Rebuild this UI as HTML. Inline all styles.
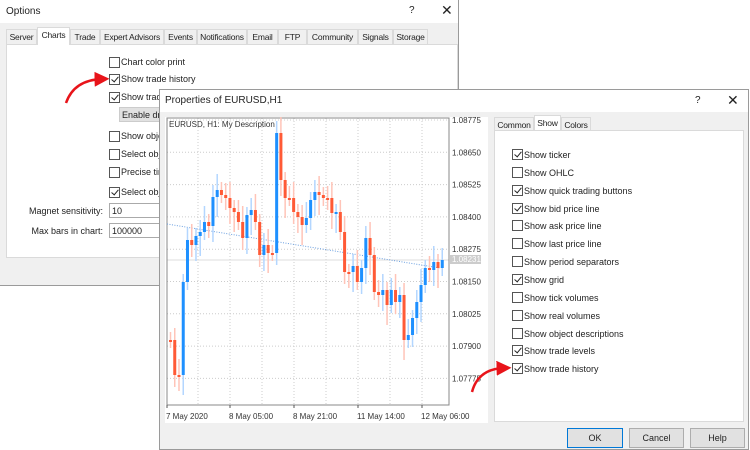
<!DOCTYPE html>
<html><head><meta charset="utf-8"><style>
*{box-sizing:border-box;margin:0;padding:0}
body{width:750px;height:450px;background:#fff;position:relative;overflow:hidden;font-family:"Liberation Sans",sans-serif;font-size:9px;color:#222}
.a{position:absolute}
.cb{position:absolute;width:11px;height:11px;border:1px solid #555;background:#fff}
.cb.c::after{content:"";position:absolute;left:3px;top:0px;width:3px;height:6px;border:solid #222;border-width:0 1px 1px 0;transform:rotate(40deg)}
.lbl{position:absolute;white-space:nowrap}
.tab{position:absolute;top:29px;height:15px;background:#f0f0f0;border:1px solid #dadada;border-bottom:none;text-align:center;line-height:14px;font-size:8.5px;white-space:nowrap;overflow:hidden;letter-spacing:-0.2px}
.btn{position:absolute;top:428px;height:20px;background:#e1e1e1;border:1px solid #adadad;text-align:center;line-height:18px;font-size:9px}
</style></head><body>
<!-- Options window -->
<div class="a" style="left:0;top:0;width:459px;height:286px;background:#f0f0f0;border:1px solid #9a9a9a;border-top:none;border-left:none"></div>
<div class="a" style="left:0;top:0;width:458px;height:23px;background:#fff"></div>
<div class="lbl" style="left:6px;top:6px;font-size:10px">Options</div>
<div class="lbl" style="left:409px;top:5px;font-size:10px">?</div>
<div class="lbl" style="left:441px;top:2px;font-size:14px">✕</div>
<div class="a" style="left:6px;top:44px;width:452px;height:214px;background:#fff;border:1px solid #dadada"></div>
<div class="tab" style="left:6px;width:31px">Server</div>
<div class="tab" style="left:37px;width:33px;top:27px;height:18px;background:#fff">Charts</div>
<div class="tab" style="left:70px;width:30px">Trade</div>
<div class="tab" style="left:100px;width:64px">Expert Advisors</div>
<div class="tab" style="left:164px;width:33px">Events</div>
<div class="tab" style="left:197px;width:50px">Notifications</div>
<div class="tab" style="left:247px;width:31px">Email</div>
<div class="tab" style="left:278px;width:29px">FTP</div>
<div class="tab" style="left:307px;width:51px">Community</div>
<div class="tab" style="left:358px;width:35px">Signals</div>
<div class="tab" style="left:393px;width:35px">Storage</div>
<div class="cb" style="left:109px;top:57px"></div><div class="lbl" style="left:121px;top:57px">Chart color print</div>
<div class="cb c" style="left:109px;top:74px"></div><div class="lbl" style="left:121px;top:74px">Show trade history</div>
<div class="cb c" style="left:109px;top:92px"></div><div class="lbl" style="left:121px;top:92px">Show trade</div>
<div class="a" style="left:119px;top:107px;width:45px;height:15px;background:#e1e1e1;border:1px solid #ccc"></div><div class="lbl" style="left:122px;top:110px">Enable dra</div>
<div class="cb" style="left:109px;top:131px"></div><div class="lbl" style="left:121px;top:131px">Show obje</div>
<div class="cb" style="left:109px;top:149px"></div><div class="lbl" style="left:121px;top:149px">Select obje</div>
<div class="cb" style="left:109px;top:167px"></div><div class="lbl" style="left:121px;top:167px">Precise tim</div>
<div class="cb c" style="left:109px;top:187px"></div><div class="lbl" style="left:121px;top:187px">Select obje</div>
<div class="lbl" style="right:647px;top:206px">Magnet sensitivity:</div>
<div class="a" style="left:109px;top:203px;width:55px;height:15px;border:1px solid #aaa;background:#fff"></div><div class="lbl" style="left:112px;top:206px">10</div>
<div class="lbl" style="right:647px;top:226px">Max bars in chart:</div>
<div class="a" style="left:109px;top:223px;width:55px;height:15px;border:1px solid #aaa;background:#fff"></div><div class="lbl" style="left:112px;top:226px">100000</div>

<!-- Properties window -->
<div class="a" style="left:159px;top:89px;width:590px;height:361px;background:#f0f0f0;border:1px solid #9a9a9a"></div>
<div class="a" style="left:160px;top:90px;width:588px;height:22px;background:#fff"></div>
<div class="lbl" style="left:165px;top:95px;font-size:10px">Properties of EURUSD,H1</div>
<div class="lbl" style="left:695px;top:95px;font-size:10px">?</div>
<div class="lbl" style="left:727px;top:92px;font-size:14px">✕</div>
<div class="a" style="left:165px;top:117px;width:323px;height:306px;background:#fff"></div>
<svg class="a" style="left:0;top:0" width="750" height="450" id="ch"></svg>
<div class="tab" style="left:494px;top:117px;width:40px">Common</div>
<div class="tab" style="left:534px;top:115px;width:27px;height:16px;background:#fff">Show</div>
<div class="tab" style="left:561px;top:117px;width:30px">Colors</div>
<div class="a" style="left:494px;top:130px;width:250px;height:292px;background:#fff;border:1px solid #dadada"></div>
<div id="rows"></div>
<div class="btn" style="left:567px;width:56px;border:1px solid #0078d7">OK</div>
<div class="btn" style="left:629px;width:55px">Cancel</div>
<div class="btn" style="left:690px;width:55px">Help</div>

<svg class="a" style="left:0;top:0" width="750" height="450">
<defs><marker id="ar" markerWidth="6" markerHeight="6" refX="3" refY="3" orient="auto"><path d="M0,0 L6,3 L0,6 z" fill="#e8141a"/></marker></defs>
<path d="M66,103 Q74,80 102,79" stroke="#e8141a" stroke-width="2.5" fill="none" marker-end="url(#ar)"/>
<path d="M472,392 Q478,369 504,368" stroke="#e8141a" stroke-width="2.5" fill="none" marker-end="url(#ar)"/>
</svg>
<script>
var rows=[["Show ticker",1],["Show OHLC",0],["Show quick trading buttons",1],["Show bid price line",1],["Show ask price line",0],["Show last price line",0],["Show period separators",0],["Show grid",1],["Show tick volumes",0],["Show real volumes",0],["Show object descriptions",0],["Show trade levels",1],["Show trade history",1]];
var h="";rows.forEach(function(r,i){var y=149+i*17.85;h+='<div class="cb'+(r[1]?' c':'')+'" style="left:512px;top:'+y+'px"></div><div class="lbl" style="left:524px;top:'+(y+1)+'px">'+r[0]+'</div>';});
document.getElementById("rows").innerHTML=h;
var s='';
var L=167,R=449,T=118,B=405;
for(var x=198;x<R;x+=32)s+='<line x1="'+x+'" y1="'+T+'" x2="'+x+'" y2="'+B+'" stroke="#ccc" stroke-dasharray="1,2"/>';
var pr=["1.08775","1.08650","1.08525","1.08400","1.08275","1.08150","1.08025","1.07900","1.07775"];
pr.forEach(function(p,i){var y=120+i*32.3;s+='<line x1="'+L+'" y1="'+y+'" x2="'+R+'" y2="'+y+'" stroke="#ccc" stroke-dasharray="1,2"/><text x="452" y="'+(y+3)+'" font-size="8" fill="#333">'+p+'</text>';});
s+='<line x1="'+L+'" y1="260" x2="'+R+'" y2="260" stroke="#ddd"/>';
s+='<rect x="450" y="255" width="31" height="9" fill="#ccc"/><text x="452" y="262" font-size="8" fill="#fff">1.08231</text>';
s+='<rect x="'+L+'" y="'+T+'" width="'+(R-L)+'" height="'+(B-T)+'" fill="none" stroke="#888"/>';
s+='<line x1="'+L+'" y1="224" x2="440" y2="268" stroke="#6a9fe0" stroke-dasharray="1,1.5"/>';
var c=[340,375,375,282,240,245,236,232,222,226,197,190,195,198,208,212,222,238,215,210,222,255,245,253,253,133,180,198,198,212,217,225,218,200,192,195,198,198,213,212,232,272,272,266,282,268,238,255,292,295,290,305,290,302,295,340,335,318,302,285,268,270,262,268,260];
var o=340,dx=(445-169)/c.length;
c.forEach(function(cl,i){var x=169+i*dx;var up=cl<o;var col=up?"#1e90ff":"#ff5a36";var wc=up?"#b3d6ff":"#ffc4b8";var t=Math.min(o,cl),b=Math.max(o,cl);
s+='<line x1="'+(x+1.5)+'" y1="'+(t-8-(i%3)*4)+'" x2="'+(x+1.5)+'" y2="'+(b+8+(i%4)*4)+'" stroke="'+wc+'" stroke-width="1.5"/>';
s+='<rect x="'+x+'" y="'+t+'" width="3" height="'+Math.max(2,b-t)+'" fill="'+col+'"/>';o=cl;});
var d=[["7 May 2020",166],["8 May 05:00",229],["8 May 21:00",293],["11 May 14:00",357],["12 May 06:00",421]];
d.forEach(function(e){s+='<line x1="'+(e[1]+1)+'" y1="405" x2="'+(e[1]+1)+'" y2="408" stroke="#555"/><text x="'+e[1]+'" y="419" font-size="8" fill="#333">'+e[0]+'</text>';});
s+='<text x="169" y="127" font-size="8" fill="#333">EURUSD, H1:  My Description</text>';
document.getElementById("ch").innerHTML=s;
</script>
</body></html>
